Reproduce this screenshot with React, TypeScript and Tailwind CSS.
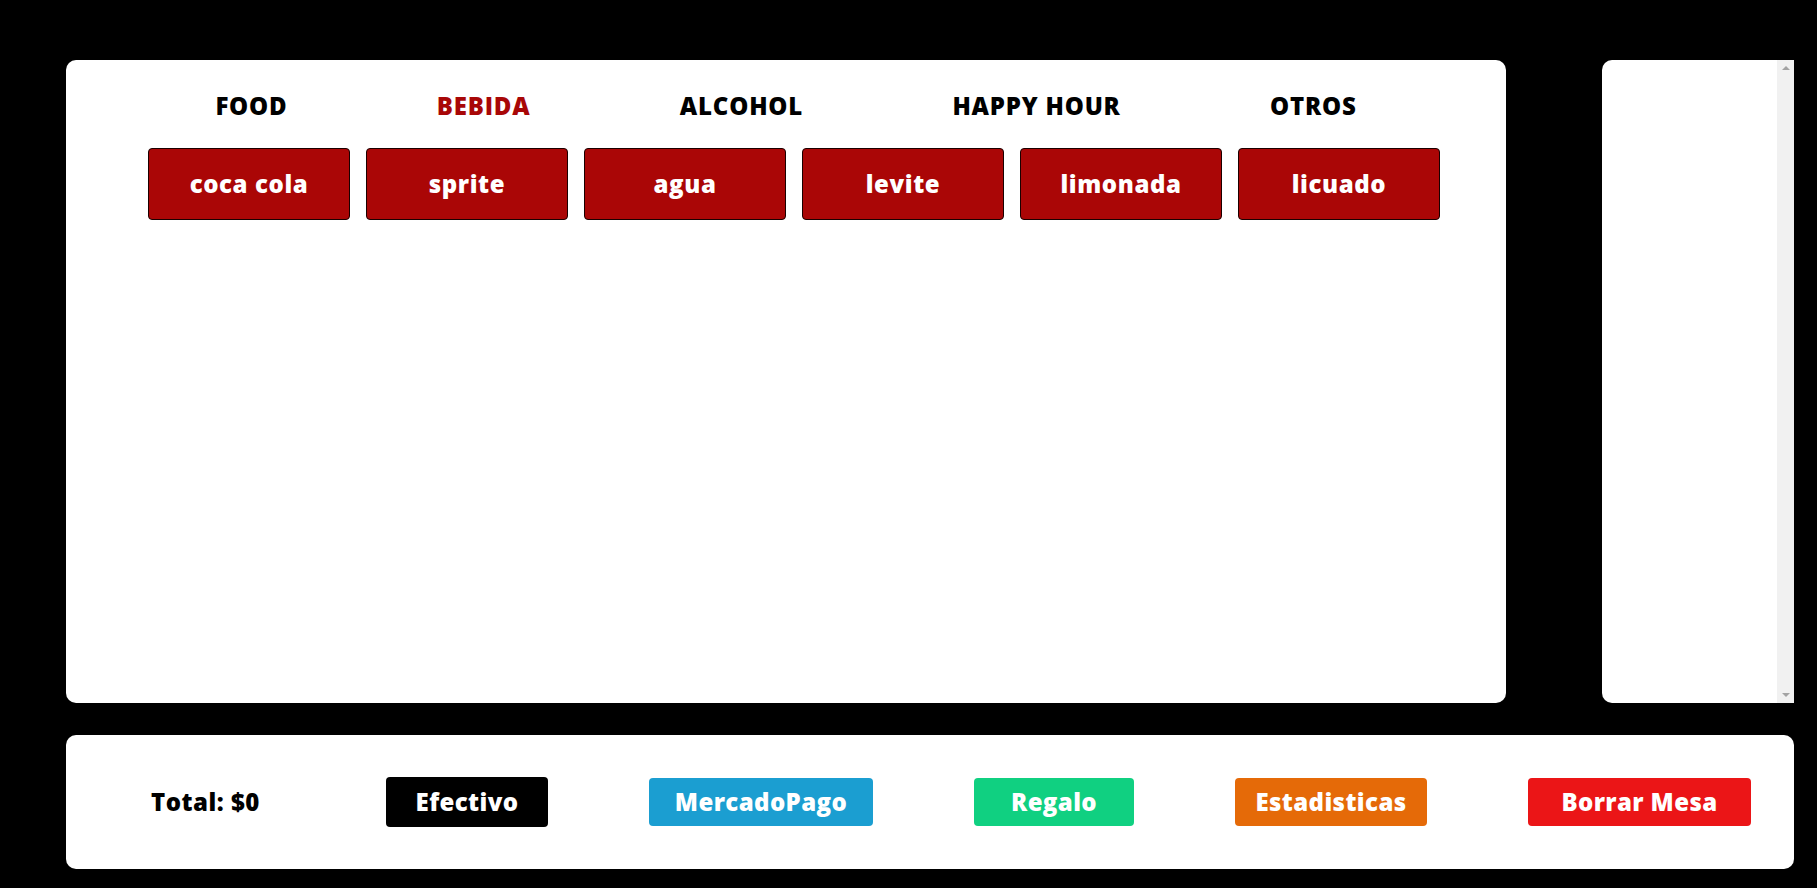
const categories = ["FOOD", "BEBIDA", "ALCOHOL", "HAPPY HOUR", "OTROS"];
const activeCategory = "BEBIDA";

const products = ["coca cola", "sprite", "agua", "levite", "limonada", "licuado"];

const actions = [
  { label: "Efectivo", className: "w-[162px] h-[50px] bg-black" },
  { label: "MercadoPago", className: "w-[224px] h-[48px] bg-[#1b9ed1]" },
  { label: "Regalo", className: "w-[160px] h-[48px] bg-[#10d081]" },
  { label: "Estadisticas", className: "w-[192px] h-[48px] bg-[#e56a08]" },
  { label: "Borrar Mesa", className: "w-[223px] h-[48px] bg-[#eb1517]" },
];

const font = { fontFamily: '"Open Sans", "Noto Sans", sans-serif' };

export default function App() {
  return (
    <div className="min-h-[888px] w-full bg-black pt-[60px] pl-[66px] pr-[23px]" style={font}>
      <div className="flex h-[643px] gap-[96px]">
        <div className="flex w-[1440px] flex-col rounded-[10px] bg-white">
          <div className="flex justify-evenly pt-[31px]">
            {categories.map((cat) => (
              <button
                key={cat}
                className={`text-[24px] font-extrabold leading-[30px] tracking-[0.8px] ${
                  cat === activeCategory ? "text-[#a80707]" : "text-black"
                }`}
              >
                {cat}
              </button>
            ))}
          </div>
          <div className="mt-[27px] flex gap-[16px] pl-[82px]">
            {products.map((p) => (
              <button
                key={p}
                className="flex h-[72px] w-[202px] items-center justify-center rounded-[4px] border border-[#1a0000] bg-[#aa0606] text-[24px] font-extrabold tracking-[0.6px] text-white"
              >
                {p}
              </button>
            ))}
          </div>
        </div>
        <div className="flex w-[192px] overflow-hidden rounded-l-[10px] bg-white">
          <div className="flex-1" />
          <div className="flex w-[17px] flex-col items-center justify-between bg-[#f1f1f1] py-[6px]">
            <span className="h-0 w-0 border-x-[4px] border-b-[4px] border-x-transparent border-b-[#a3a3a3]" />
            <span className="h-0 w-0 border-x-[4px] border-t-[4px] border-x-transparent border-t-[#a3a3a3]" />
          </div>
        </div>
      </div>

      <div className="mt-[32px] flex h-[134px] w-[1728px] items-center gap-[101px] rounded-[10px] bg-white pl-[85px]">
        <span className="w-[134px] text-[24px] font-extrabold tracking-[0.5px] text-black">Total: $0</span>
        {actions.map((a) => (
          <button
            key={a.label}
            className={`flex items-center justify-center rounded-[4px] text-[24px] font-extrabold tracking-[0.4px] text-white ${a.className}`}
          >
            {a.label}
          </button>
        ))}
      </div>
    </div>
  );
}
